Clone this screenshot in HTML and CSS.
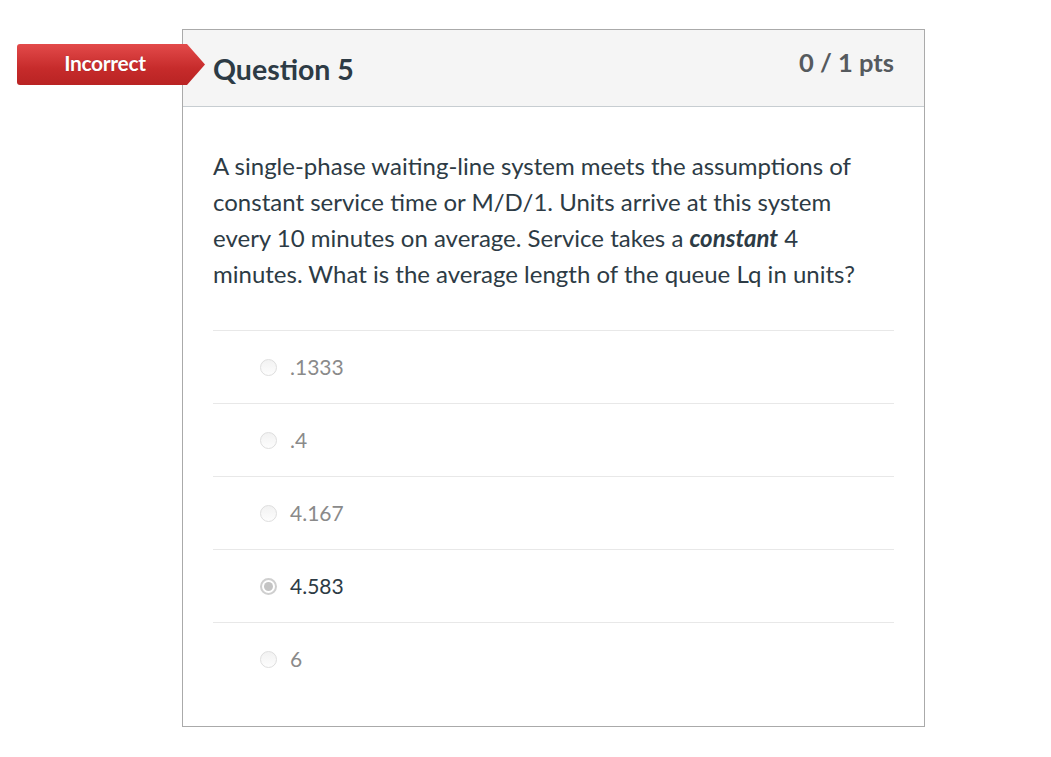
FILE: index.html
```html
<!DOCTYPE html>
<html>
<head>
<meta charset="utf-8">
<link rel="stylesheet" href="styles.css">
</head>
<body>
<div class="page">
  <div class="card">
    <div class="badge">Incorrect</div>
    <div class="header">
      <h2 class="title">Question 5</h2>
      <div class="pts">0 / 1 pts</div>
    </div>
    <div class="body">
      <p class="question">A single-phase waiting-line system meets the assumptions of constant service time or M/D/1. Units arrive at this system every 10 minutes on average. Service takes a <strong><em>constant</em></strong> 4 minutes. What is the average length of the queue Lq in units?</p>
      <div class="answers">
        <div class="answer"><span class="radio"></span><span class="label">.1333</span></div>
        <div class="answer"><span class="radio"></span><span class="label">.4</span></div>
        <div class="answer"><span class="radio"></span><span class="label">4.167</span></div>
        <div class="answer selected"><span class="radio"></span><span class="label">4.583</span></div>
        <div class="answer"><span class="radio"></span><span class="label">6</span></div>
      </div>
    </div>
  </div>
</div>
</body>
</html>
```

FILE: styles.css
```css
html, body {
  margin: 0;
  padding: 0;
  background: #ffffff;
  font-family: Lato, "Noto Sans", sans-serif;
  color: #2d3b45;
}
.page {
  padding: 29px 0 0 182px;
}
.card {
  position: relative;
  width: 741px;
  border: 1px solid #aaaaaa;
  background: #fff;
}
.badge {
  position: absolute;
  left: -166px;
  top: 14px;
  width: 188px;
  height: 41px;
  box-sizing: border-box;
  padding-right: 12px;
  padding-bottom: 5px;
  display: flex;
  align-items: center;
  justify-content: center;
  color: #fff;
  font-weight: 700;
  font-size: 21px;
  letter-spacing: -0.3px;
  background: linear-gradient(#e34a4a, #c62b2b 60%, #b92323);
  clip-path: polygon(0 0, 170px 0, 188px 50%, 170px 100%, 0 100%);
  border-radius: 3px 0 0 3px;
  text-shadow: 0 0 1px rgba(0,0,0,0.3);
}
.header {
  height: 76px;
  background: #f5f5f5;
  border-bottom: 1px solid #c7cdd1;
  display: flex;
  justify-content: space-between;
  align-items: flex-start;
  padding: 0 30px;
}
.title {
  margin: 0;
  margin-top: 22px;
  font-size: 28.5px;
  font-weight: 700;
  color: #2d3b45;
  line-height: 34px;
}
.pts {
  margin-top: 17px;
  font-size: 25.5px;
  font-weight: 700;
  color: #555a5e;
  line-height: 30px;
}
.body {
  padding: 41px 30px 31px 30px;
}
.question {
  margin: 0;
  max-width: 660px;
  font-size: 24px;
  line-height: 36px;
  color: #2d3b45;
}
.question strong {
  font-weight: 700;
}
.answers {
  margin-top: 38px;
}
.answer {
  height: 72px;
  border-top: 1px solid #e8e8e8;
  display: flex;
  align-items: center;
  padding-left: 47px;
}
.radio {
  width: 17px;
  height: 17px;
  border-radius: 50%;
  border: 1px solid #dedede;
  background: linear-gradient(#f2f2f2, #fdfdfd);
  margin-right: 13px;
  box-sizing: border-box;
  position: relative;
}
.label {
  font-size: 21px;
  color: #8a8a8a;
  line-height: 26px;
}
.selected .label {
  color: #2d3b45;
}
.selected .radio {
  border: 2px solid #cfcfcf;
  background: #fff;
}
.selected .radio::after {
  content: "";
  position: absolute;
  left: 2px;
  top: 2px;
  width: 9px;
  height: 9px;
  border-radius: 50%;
  background: #c4c4c4;
}
```
